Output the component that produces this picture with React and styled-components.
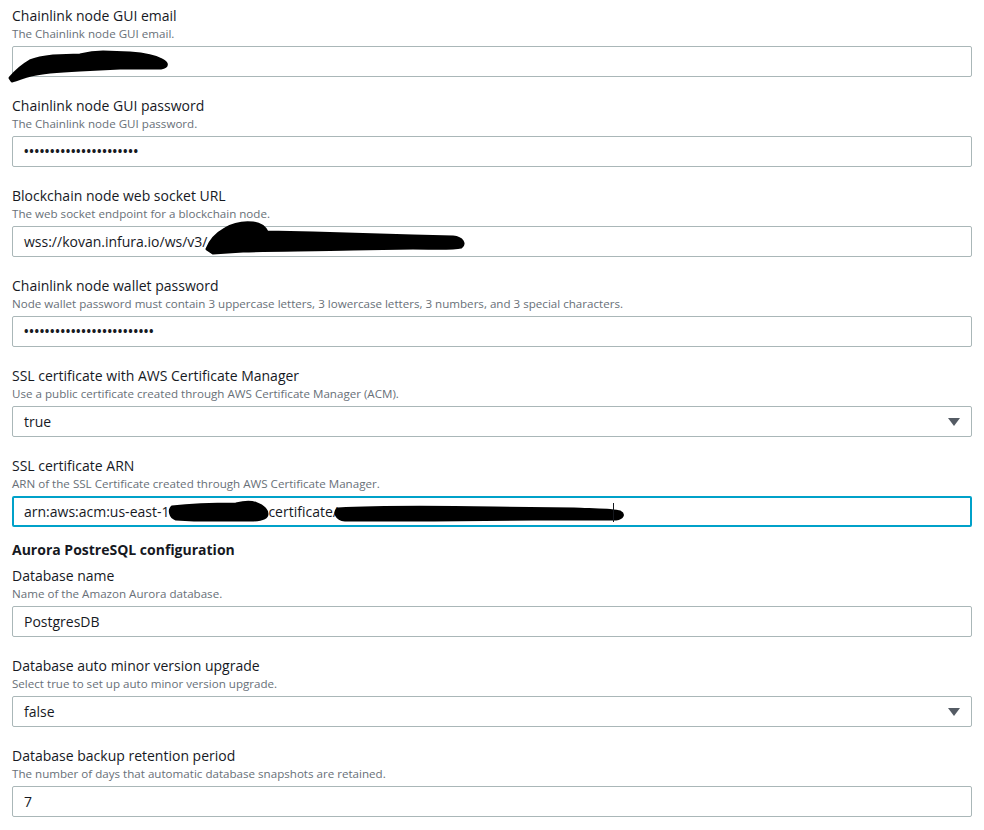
import React from 'react';
import styled, { createGlobalStyle, css } from 'styled-components';

const GlobalStyle = createGlobalStyle`
  body {
    margin: 0;
    background: #ffffff;
    font-family: "Open Sans", "Noto Sans", sans-serif;
    color: #16191f;
  }
`;

const Page = styled.main`
  width: 984px;
  box-sizing: border-box;
  padding: 6px 12px 12px;
  display: flex;
  flex-direction: column;
  gap: 13px;
`;

const Group = styled.div`
  display: flex;
  flex-direction: column;
  gap: 19px;
`;

const SectionTitle = styled.h3`
  margin: 0 0 6px;
  font-size: 14px;
  line-height: 20px;
  font-weight: 700;
`;

const Field = styled.div`
  display: flex;
  flex-direction: column;
`;

const Label = styled.label`
  font-size: 14px;
  line-height: 20px;
  color: #16191f;
`;

const Hint = styled.div`
  font-size: 11.6px;
  line-height: 16px;
  color: #687078;
`;

const InputBox = styled.div`
  position: relative;
  margin-top: 4px;
  height: 31px;
  box-sizing: border-box;
  border: 1px solid #aab7b8;
  border-radius: 2px;
  padding: 0 11px;
  display: flex;
  align-items: center;
  font-size: 14px;
  color: #16191f;
  white-space: pre;

  ${p => p.$focused && css`
    border: 2px solid #00a1c9;
    padding: 0 10px;
  `}
`;

const Masked = styled.span`
  font-size: 12px;
  letter-spacing: 0.7px;
  font-weight: 700;
  color: #16191f;
`;

const Arrow = styled.svg`
  margin-left: auto;
  width: 12px;
  height: 8px;
`;

const Caret = styled.span`
  position: absolute;
  left: ${p => p.$x}px;
  top: 5px;
  height: 19px;
  border-left: 1px solid #16191f;
`;

const Scribble = styled.svg`
  position: absolute;
  left: 0;
  top: 0;
  overflow: visible;
  pointer-events: none;
`;

// marker-pen blots hiding private values
function Redaction({ shapes }) {
  return (
    <Scribble width="1" height="1">
      {shapes.map((d, i) => (
        <path key={i} d={d} fill="#000" stroke="#000" strokeWidth="3" strokeLinejoin="round" strokeLinecap="round" />
      ))}
    </Scribble>
  );
}

function Select({ value }) {
  return (
    <InputBox>
      {value}
      <Arrow viewBox="0 0 12 8">
        <path d="M0 0 H12 L6 8 Z" fill="#545b64" />
      </Arrow>
    </InputBox>
  );
}

const emailShapes = [
  'M-3 31 C 2 25, 10 18, 17 14 C 24 11, 30 10, 40 9 L 67 8 C 75 6, 82 5, 90 5 L 117 6 C 130 7, 142 9, 149 13 C 155 16, 155 20, 148 21 L 107 21 L 67 23 C 45 24, 30 25, 18 28 C 10 30, 4 33, -1 34 Z',
];

const wssShapes = [
  'M194 22 C 197 14, 203 7, 212 2 C 220 -3, 230 -5, 240 -4 C 248 -3, 252 1, 254 5 L 300 6 C 330 7, 360 8, 400 9 L 440 10 C 450 11, 452 17, 448 20 C 440 22, 420 21, 400 21 L 340 22 C 300 23, 260 23, 230 24 L 200 26 Z',
];

const arnShapes = [
  'M158 9 C 175 7, 200 6, 222 6 C 230 4, 237 3, 243 6 C 249 8, 253 12, 253 16 C 253 20, 247 22, 237 22 L 180 22 L 162 21 C 156 19, 155 12, 158 9 Z',
  'M324 11 C 360 9, 420 9, 480 10 L 560 11 C 585 12, 600 12, 606 14 C 610 16, 609 20, 602 21 L 520 21 L 420 22 L 331 22 C 322 21, 320 14, 324 11 Z',
];

export default function App() {
  return (
    <>
      <GlobalStyle />
      <Page>
        <Group>
          <Field>
            <Label>Chainlink node GUI email</Label>
            <Hint>The Chainlink node GUI email.</Hint>
            <InputBox>
              <Redaction shapes={emailShapes} />
            </InputBox>
          </Field>

          <Field>
            <Label>Chainlink node GUI password</Label>
            <Hint>The Chainlink node GUI password.</Hint>
            <InputBox>
              <Masked>{'•'.repeat(22)}</Masked>
            </InputBox>
          </Field>

          <Field>
            <Label>Blockchain node web socket URL</Label>
            <Hint>The web socket endpoint for a blockchain node.</Hint>
            <InputBox>
              <span>wss://kovan.infura.io/ws/v3/</span>
              <Redaction shapes={wssShapes} />
            </InputBox>
          </Field>

          <Field>
            <Label>Chainlink node wallet password</Label>
            <Hint>Node wallet password must contain 3 uppercase letters, 3 lowercase letters, 3 numbers, and 3 special characters.</Hint>
            <InputBox>
              <Masked>{'•'.repeat(25)}</Masked>
            </InputBox>
          </Field>

          <Field>
            <Label>SSL certificate with AWS Certificate Manager</Label>
            <Hint>Use a public certificate created through AWS Certificate Manager (ACM).</Hint>
            <Select value="true" />
          </Field>

          <Field>
            <Label>SSL certificate ARN</Label>
            <Hint>ARN of the SSL Certificate created through AWS Certificate Manager.</Hint>
            <InputBox $focused>
              <span>{'arn:aws:acm:us-east-1 23000000000  certificate/'}</span>
              <Redaction shapes={arnShapes} />
              <Caret $x={599} />
            </InputBox>
          </Field>
        </Group>

        <div>
          <SectionTitle>Aurora PostreSQL configuration</SectionTitle>
          <Group>
            <Field>
              <Label>Database name</Label>
              <Hint>Name of the Amazon Aurora database.</Hint>
              <InputBox>PostgresDB</InputBox>
            </Field>

            <Field>
              <Label>Database auto minor version upgrade</Label>
              <Hint>Select true to set up auto minor version upgrade.</Hint>
              <Select value="false" />
            </Field>

            <Field>
              <Label>Database backup retention period</Label>
              <Hint>The number of days that automatic database snapshots are retained.</Hint>
              <InputBox>7</InputBox>
            </Field>
          </Group>
        </div>
      </Page>
    </>
  );
}
